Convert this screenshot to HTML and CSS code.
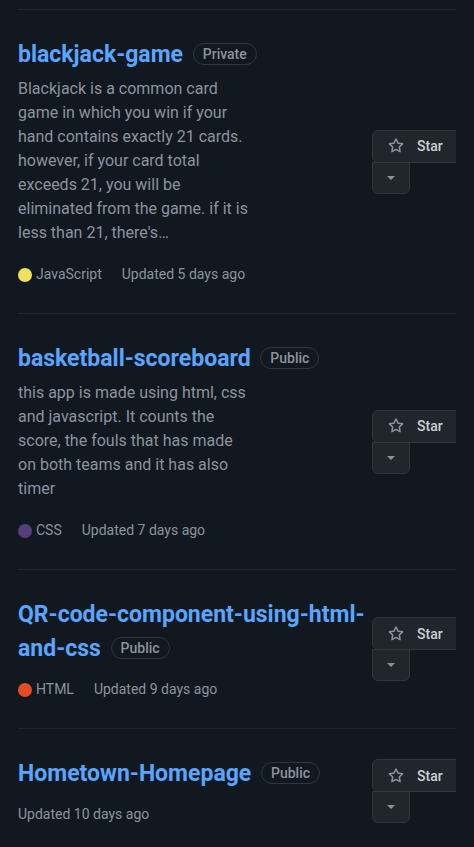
FILE: index.html
```html
<!DOCTYPE html>
<html lang="en">
<head>
<meta charset="utf-8">
<title>Repositories</title>
<link rel="stylesheet" href="styles.css">
</head>
<body>
<ul class="repo-list">
  <li class="repo">
    <div class="info">
      <h3 class="title"><a class="name" href="#">blackjack-game</a> <span class="badge">Private</span></h3>
      <p class="desc">Blackjack is a common card game in which you win if your hand contains exactly 21 cards. however, if your card total exceeds 21, you will be eliminated from the game. if it is less than 21, there's…</p>
      <div class="meta"><span class="lang"><span class="dot dot-js"></span>JavaScript</span><span class="updated">Updated 5 days ago</span></div>
    </div>
    <div class="actions">
      <div class="star-group">
        <button class="star-btn"><svg class="star-icon" viewBox="0 0 16 16" width="16" height="16"><path d="M8 .25a.75.75 0 0 1 .673.418l1.882 3.815 4.21.612a.75.75 0 0 1 .416 1.279l-3.046 2.970.719 4.192a.751.751 0 0 1-1.088.791L8 12.347l-3.766 1.980a.75.75 0 0 1-1.088-.79l.72-4.194L.818 6.374a.75.75 0 0 1 .416-1.28l4.21-.611L7.327.668A.75.75 0 0 1 8 .25Zm0 2.445L6.615 5.5a.75.75 0 0 1-.564.41l-3.097.45 2.24 2.184a.75.75 0 0 1 .216.664l-.528 3.084 2.769-1.456a.75.75 0 0 1 .698 0l2.770 1.456-.53-3.084a.75.75 0 0 1 .216-.664l2.24-2.183-3.096-.45a.75.75 0 0 1-.564-.41L8 2.694Z"/></svg><span>Star</span></button>
        <button class="drop-btn"><span class="caret"></span></button>
      </div>
    </div>
  </li>
  <li class="repo">
    <div class="info">
      <h3 class="title"><a class="name" href="#">basketball-scoreboard</a> <span class="badge">Public</span></h3>
      <p class="desc">this app is made using html, css and javascript. It counts the score, the fouls that has made on both teams and it has also timer</p>
      <div class="meta"><span class="lang"><span class="dot dot-css"></span>CSS</span><span class="updated">Updated 7 days ago</span></div>
    </div>
    <div class="actions">
      <div class="star-group">
        <button class="star-btn"><svg class="star-icon" viewBox="0 0 16 16" width="16" height="16"><path d="M8 .25a.75.75 0 0 1 .673.418l1.882 3.815 4.21.612a.75.75 0 0 1 .416 1.279l-3.046 2.970.719 4.192a.751.751 0 0 1-1.088.791L8 12.347l-3.766 1.980a.75.75 0 0 1-1.088-.79l.72-4.194L.818 6.374a.75.75 0 0 1 .416-1.28l4.21-.611L7.327.668A.75.75 0 0 1 8 .25Zm0 2.445L6.615 5.5a.75.75 0 0 1-.564.41l-3.097.45 2.24 2.184a.75.75 0 0 1 .216.664l-.528 3.084 2.769-1.456a.75.75 0 0 1 .698 0l2.770 1.456-.53-3.084a.75.75 0 0 1 .216-.664l2.24-2.183-3.096-.45a.75.75 0 0 1-.564-.41L8 2.694Z"/></svg><span>Star</span></button>
        <button class="drop-btn"><span class="caret"></span></button>
      </div>
    </div>
  </li>
  <li class="repo">
    <div class="info">
      <h3 class="title"><a class="name" href="#">QR-code-component-using-html-and-css</a> <span class="badge">Public</span></h3>
      <div class="meta"><span class="lang"><span class="dot dot-html"></span>HTML</span><span class="updated">Updated 9 days ago</span></div>
    </div>
    <div class="actions">
      <div class="star-group">
        <button class="star-btn"><svg class="star-icon" viewBox="0 0 16 16" width="16" height="16"><path d="M8 .25a.75.75 0 0 1 .673.418l1.882 3.815 4.21.612a.75.75 0 0 1 .416 1.279l-3.046 2.970.719 4.192a.751.751 0 0 1-1.088.791L8 12.347l-3.766 1.980a.75.75 0 0 1-1.088-.79l.72-4.194L.818 6.374a.75.75 0 0 1 .416-1.28l4.21-.611L7.327.668A.75.75 0 0 1 8 .25Zm0 2.445L6.615 5.5a.75.75 0 0 1-.564.41l-3.097.45 2.24 2.184a.75.75 0 0 1 .216.664l-.528 3.084 2.769-1.456a.75.75 0 0 1 .698 0l2.770 1.456-.53-3.084a.75.75 0 0 1 .216-.664l2.24-2.183-3.096-.45a.75.75 0 0 1-.564-.41L8 2.694Z"/></svg><span>Star</span></button>
        <button class="drop-btn"><span class="caret"></span></button>
      </div>
    </div>
  </li>
  <li class="repo">
    <div class="info">
      <h3 class="title"><a class="name" href="#">Hometown-Homepage</a> <span class="badge">Public</span></h3>
      <div class="meta"><span class="updated">Updated 10 days ago</span></div>
    </div>
    <div class="actions">
      <div class="star-group">
        <button class="star-btn"><svg class="star-icon" viewBox="0 0 16 16" width="16" height="16"><path d="M8 .25a.75.75 0 0 1 .673.418l1.882 3.815 4.21.612a.75.75 0 0 1 .416 1.279l-3.046 2.970.719 4.192a.751.751 0 0 1-1.088.791L8 12.347l-3.766 1.980a.75.75 0 0 1-1.088-.79l.72-4.194L.818 6.374a.75.75 0 0 1 .416-1.28l4.21-.611L7.327.668A.75.75 0 0 1 8 .25Zm0 2.445L6.615 5.5a.75.75 0 0 1-.564.41l-3.097.45 2.24 2.184a.75.75 0 0 1 .216.664l-.528 3.084 2.769-1.456a.75.75 0 0 1 .698 0l2.770 1.456-.53-3.084a.75.75 0 0 1 .216-.664l2.24-2.183-3.096-.45a.75.75 0 0 1-.564-.41L8 2.694Z"/></svg><span>Star</span></button>
        <button class="drop-btn"><span class="caret"></span></button>
      </div>
    </div>
  </li>
</ul>
</body>
</html>
```

FILE: styles.css
```css
html, body {
  margin: 0;
  padding: 0;
  background: #121820;
  font-family: Roboto, "Noto Sans", "Liberation Sans", sans-serif;
  color: #8b949e;
  overflow: hidden;
}

.repo-list {
  list-style: none;
  margin: 0 18px;
  padding: 9px 0 0;
}

.repo {
  display: flex;
  align-items: center;
  gap: 6px;
  border-top: 1px solid #21262d;
  padding: 28px 0 28px;
}

.info {
  flex: 1;
  min-width: 0;
}

.title {
  margin: 0;
  font-size: 23px;
  line-height: 34px;
  font-weight: 700;
}

.name {
  color: #58a6ff;
  text-decoration: none;
}

.badge {
  display: inline-block;
  vertical-align: 3px;
  margin-left: 4px;
  padding: 0 9px;
  border: 1px solid #30363d;
  border-radius: 2em;
  font-size: 14px;
  line-height: 20px;
  font-weight: 500;
  color: #8b949e;
}

.desc {
  margin: 5px 0 19px;
  width: 232px;
  font-size: 16px;
  line-height: 24px;
  color: #8b949e;
}

.meta {
  display: flex;
  align-items: center;
  gap: 20px;
  margin-top: 13px;
  font-size: 14px;
  line-height: 21px;
  color: #8b949e;
}

.lang {
  display: flex;
  align-items: center;
  gap: 4px;
}

.dot {
  width: 14px;
  height: 14px;
  border-radius: 50%;
  display: inline-block;
}

.dot-js { background: #f1e05a; }
.dot-css { background: #563d7c; }
.dot-html { background: #e34c26; }

.actions {
  width: 84px;
  flex: none;
  overflow: hidden;
}

.star-group {
  display: flex;
  flex-direction: column;
  align-items: flex-start;
}

.star-btn {
  display: flex;
  align-items: center;
  gap: 13px;
  width: 100px;
  height: 33px;
  padding: 0 0 0 15px;
  background: #21262d;
  border: 1px solid #30363d;
  border-radius: 6px 0 0 6px;
  color: #c9d1d9;
  font-family: inherit;
  font-size: 14px;
  font-weight: 500;
  box-sizing: border-box;
}

.star-icon {
  fill: #8b949e;
  flex: none;
}

.drop-btn {
  display: flex;
  align-items: center;
  justify-content: center;
  width: 38px;
  height: 32px;
  margin-top: -1px;
  padding: 0;
  background: #21262d;
  border: 1px solid #30363d;
  border-radius: 0 0 6px 6px;
  box-sizing: border-box;
}

.caret {
  width: 0;
  height: 0;
  border-left: 4px solid transparent;
  border-right: 4px solid transparent;
  border-top: 4px solid #8b949e;
}
```
